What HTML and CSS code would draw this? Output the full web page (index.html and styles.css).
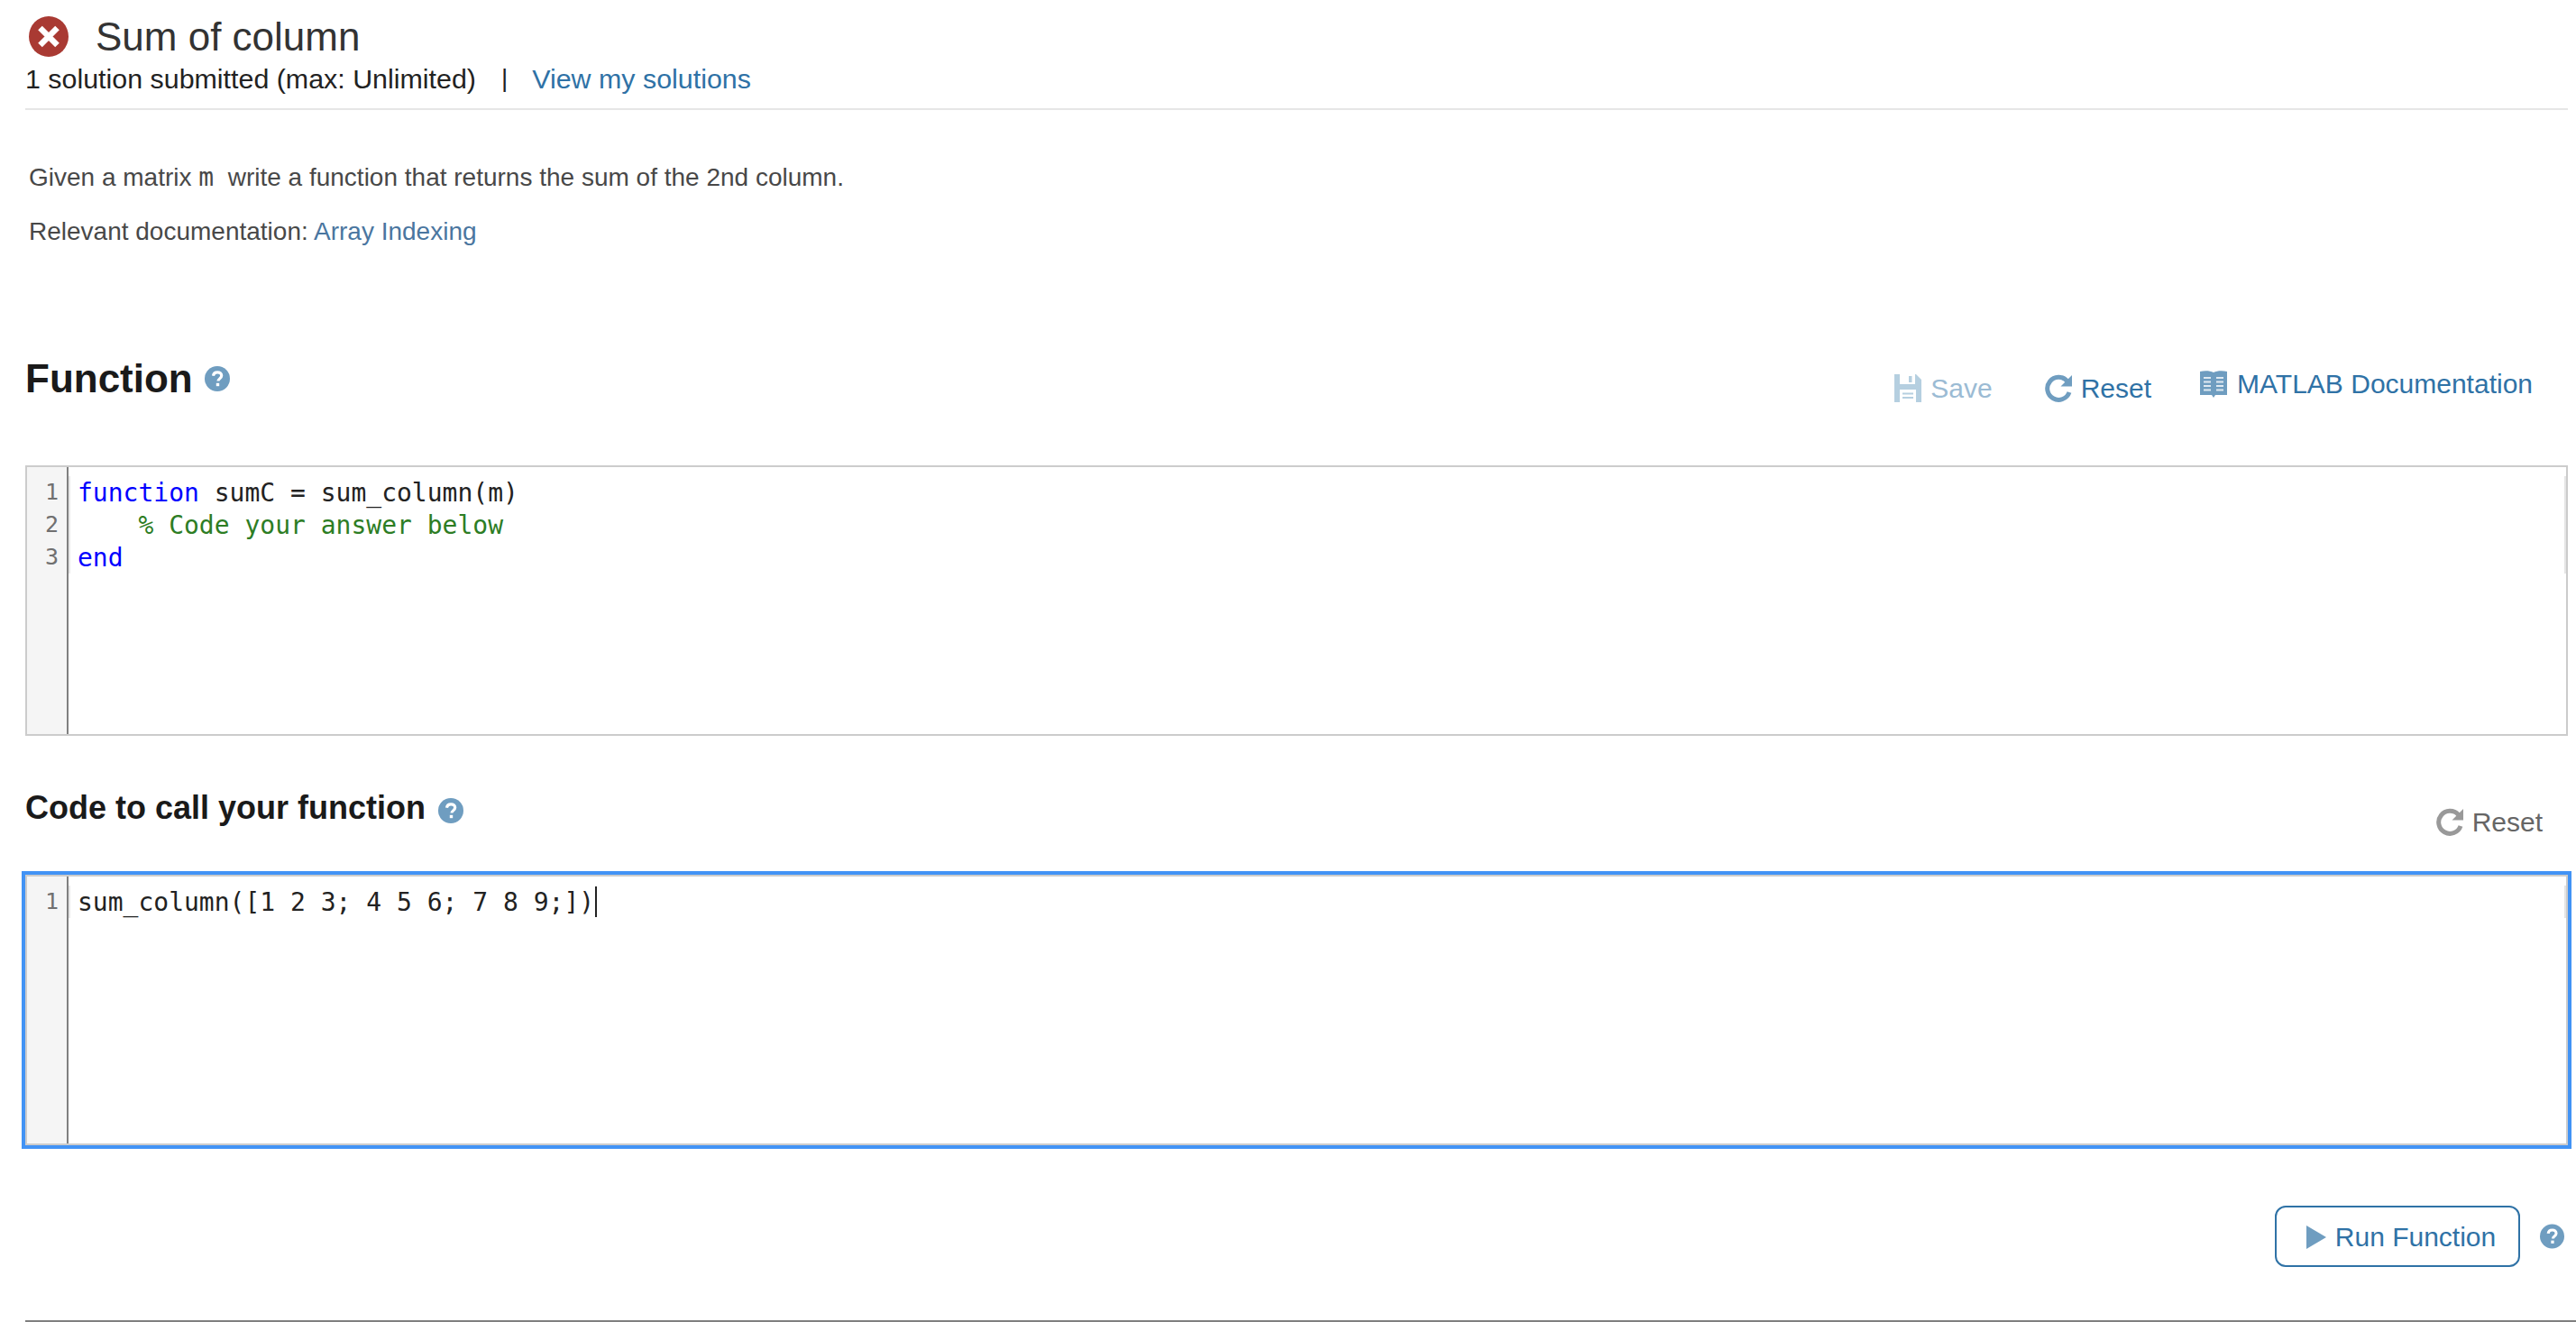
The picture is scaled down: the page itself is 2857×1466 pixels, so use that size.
FILE: index.html
```html
<!DOCTYPE html>
<html lang="en">
<head>
<meta charset="utf-8">
<title>Sum of column</title>
<link rel="stylesheet" href="styles.css">
</head>
<body>
<svg class="sprites" width="0" height="0" aria-hidden="true">
  <symbol id="help" viewBox="0 0 28 28">
    <circle cx="14" cy="14" r="14" fill="currentColor"/>
    <path d="M9.500 10.800c.3-2.600 2.200-4 4.700-4 2.600 0 4.500 1.500 4.500 3.800 0 3.200-3.700 3.300-3.700 6" fill="none" stroke="#fff" stroke-width="3.200"/>
    <rect x="12.800" y="18.800" width="3.400" height="3.400" fill="#fff"/>
  </symbol>
  <symbol id="reset" viewBox="0 0 30 31">
    <path d="M24.500 7.500A12.500 12.500 0 1 0 27 20" fill="none" stroke="currentColor" stroke-width="5"/>
    <path d="M30 1V13.500H17.500Z" fill="currentColor"/>
  </symbol>
</svg>

<header class="head">
  <div class="title-row">
    <svg class="err" viewBox="0 0 44 45" aria-hidden="true">
      <ellipse cx="22" cy="22.500" rx="22" ry="22.500" fill="#a93a33"/>
      <path d="M12.500 13 31.500 32M31.500 13 12.500 32" stroke="#fff" stroke-width="6.500"/>
    </svg>
    <h1 class="title">Sum of column</h1>
  </div>
  <div class="meta">
    <span>1 solution submitted (max: Unlimited)</span>
    <span class="sep">|</span>
    <a class="link">View my solutions</a>
  </div>
</header>

<section class="desc">
  <p>Given a matrix <code class="inline">m</code> &nbsp;write a function that returns the sum of the 2nd column.</p>
  <p>Relevant documentation: <a class="doc-link">Array Indexing</a></p>
</section>

<div class="fn-row">
  <h2 class="h-fn">Function <svg class="help help-fn"><use href="#help"/></svg></h2>
  <div class="actions">
    <a class="act act-save">
      <svg class="ic" viewBox="0 0 30 31" aria-hidden="true">
        <path d="M0 0H24L30 6V31H0Z" fill="currentColor"/>
        <rect x="6" y="0" width="17" height="11" fill="#fff"/>
        <rect x="16" y="2" width="3.500" height="7" fill="#b5cfe0"/>
        <rect x="6" y="17" width="18" height="14" fill="#fff"/>
        <rect x="9" y="20.500" width="12" height="2" fill="#b5cfe0"/>
        <rect x="9" y="25" width="12" height="2" fill="#b5cfe0"/>
      </svg>
      <span>Save</span>
    </a>
    <a class="act act-reset"><svg class="ic"><use href="#reset"/></svg><span>Reset</span></a>
    <a class="act act-doc">
      <svg class="ic-book" viewBox="0 0 30 30" aria-hidden="true">
        <path d="M0 1C5 0 11 0 15 2C19 0 25 0 30 1V27H17L15 30L13 27H0Z" fill="#6f9dc0"/>
        <path d="M4 8H12M4 12.500H12M4 17H12M4 21.500H12M18 8H26M18 12.500H26M18 17H26M18 21.500H26" stroke="#dfe9f1" stroke-width="2"/>
      </svg>
      <span>MATLAB Documentation</span>
    </a>
  </div>
</div>

<div class="editor">
  <div class="gutter">
    <div>1</div><div>2</div><div>3</div>
  </div>
  <pre class="code"><span class="kw">function</span> sumC = sum_column(m)
    <span class="cm">% Code your answer below</span>
<span class="kw">end</span></pre>
  <div class="mark"></div>
  <div class="thumb"></div>
</div>

<div class="call-row">
  <h3 class="h-call">Code to call your function <svg class="help help-call"><use href="#help"/></svg></h3>
  <a class="act act-reset-grey"><svg class="ic"><use href="#reset"/></svg><span>Reset</span></a>
</div>

<div class="editor editor-focus">
  <div class="gutter"><div>1</div></div>
  <pre class="code">sum_column([1 2 3; 4 5 6; 7 8 9;])<span class="caret"></span></pre>
  <div class="mark mark-short"></div>
  <div class="thumb thumb-short"></div>
</div>

<div class="run-row">
  <button class="run" type="button">
    <svg class="play" viewBox="0 0 22 26" aria-hidden="true"><path d="M0 0 22 13 0 26Z" fill="#6f9dc0"/></svg>
    <span>Run Function</span>
  </button>
  <svg class="help help-run"><use href="#help"/></svg>
</div>

<div class="foot-rule"></div>
</body>
</html>
```

FILE: styles.css
```css
* { box-sizing: border-box; }
html, body { margin: 0; padding: 0; height: 1466px; overflow: hidden; background: #fff; }
body {
  font-family: "Liberation Sans", Arial, sans-serif;
  color: #333;
  padding-left: 28px;
  position: relative;
}
.sprites { position: absolute; }
.head {
  margin-right: 9px;
  height: 122px;
  padding-top: 18px;
  border-bottom: 2px solid #e6e6e6;
}
.title-row { display: flex; align-items: center; height: 45px; padding-left: 4px; gap: 30px; }
.err { width: 44px; height: 45px; display: block; }
.title { margin: 0; font-weight: 400; font-size: 44px; line-height: 45px; color: #333; }
.meta { display: flex; align-items: center; height: 32px; margin-top: 8px; font-size: 30.4px; color: #222; }
.sep { margin: 0 27px 0 28px; font-size: 28px; }
.link { color: #2f72a6; }

.desc { padding: 59px 0 0 4px; font-size: 28px; color: #484848; height: 226px; }
.desc p { margin: 0 0 28px; line-height: 32px; }
.inline { font-family: "DejaVu Sans Mono", monospace; font-size: 28px; }
.doc-link { color: #4a76a0; }

.fn-row { display: flex; justify-content: space-between; align-items: flex-start; height: 168px; margin-right: 9px; }
.h-fn { margin: 0; padding-top: 47px; font-size: 44px; line-height: 50px; font-weight: 700; color: #1a1a1a; display: flex; align-items: center; gap: 13px; }
.help { color: #6f9dc0; display: block; }
.help-fn { width: 28px; height: 28px; }
.actions { display: flex; align-items: flex-start; gap: 58px; padding: 67px 39px 0 0; }
.act { display: flex; align-items: center; gap: 10px; font-size: 30px; line-height: 31px; }
.ic { width: 30px; height: 31px; display: block; }
.ic-book { width: 30px; height: 30px; display: block; }
.act-save { color: #9bbbd4; }
.act-save .ic { color: #b5cfe0; }
.act-reset { color: #2f72a6; }
.act-reset .ic { color: #6f9dc0; }
.act-doc { color: #2f72a6; margin: -5px 0 0 -4px; gap: 11px; }

.editor {
  position: relative;
  display: flex;
  height: 300px;
  margin-right: 9px;
  border: 2px solid #ccc;
  background: #fff;
}
.gutter {
  width: 46px;
  flex: none;
  background: #f5f5f5;
  border-right: 2px solid #808080;
  padding: 10px 9px 0 0;
  text-align: right;
  font-family: "DejaVu Sans Mono", monospace;
  font-size: 25px;
  line-height: 36px;
  color: #707070;
}
.code {
  margin: 0;
  padding: 11px 0 0 10px;
  font-family: "DejaVu Sans Mono", monospace;
  font-size: 28px;
  line-height: 36px;
  color: #222;
}
.kw { color: #0000ff; }
.cm { color: #2d7d24; }
.mark { position: absolute; left: 46px; top: 10px; width: 2px; height: 108px; background: #e8e8e8; }
.mark-short { height: 36px; }
.thumb { position: absolute; right: 0; top: 10px; width: 2px; height: 108px; background: #e5e5e5; }
.thumb-short { height: 36px; }
.editor-focus { outline: 4px solid #4293f5; }
.caret { display: inline-block; width: 2px; height: 34px; background: #222; vertical-align: -7px; margin-left: 1px; }

.call-row { display: flex; justify-content: space-between; align-items: flex-start; height: 154px; margin-right: 9px; }
.h-call { margin: 0; padding-top: 59px; font-size: 36px; line-height: 42px; font-weight: 700; color: #1a1a1a; display: flex; align-items: center; gap: 14px; }
.help-call { width: 28px; height: 28px; margin-top: 5px; }
.act-reset-grey { color: #666; margin: 80px 28px 0 0; gap: 10px; }
.act-reset-grey .ic { color: #999; }

.run-row { display: flex; justify-content: flex-end; align-items: center; gap: 22px; margin: 67px 13px 0 0; height: 68px; }
.run {
  display: flex; align-items: center; justify-content: center; gap: 10px;
  width: 272px; height: 68px; padding: 2px 0 0 8px;
  background: #fff; border: 2px solid #2f72a6; border-radius: 12px;
  font-family: inherit; font-size: 30px; color: #2f72a6;
}
.play { width: 22px; height: 26px; display: block; }
.help-run { width: 27px; height: 28px; }
.foot-rule { height: 2px; margin-top: 59px; background: #808080; }
```
